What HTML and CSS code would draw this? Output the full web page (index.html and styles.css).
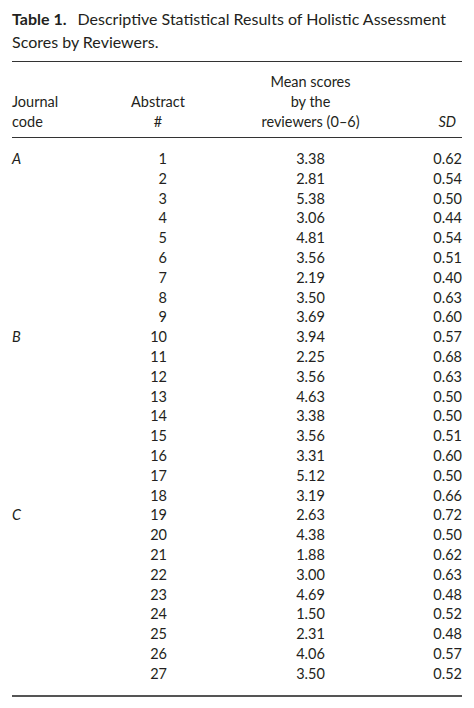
FILE: index.html
```html
<!DOCTYPE html>
<html>
<head>
<meta charset="utf-8">
<link rel="stylesheet" href="styles.css">
</head>
<body>
<div class="page">
  <div class="caption"><span class="label">Table 1.</span><span class="ctext">Descriptive Statistical Results of Holistic Assessment<br>Scores by Reviewers.</span></div>
  <div class="table">
    <div class="head">
      <div class="h h1">Journal<br>code</div>
      <div class="h h2">Abstract<br>#</div>
      <div class="h h3">Mean scores<br>by the<br>reviewers (0–6)</div>
      <div class="h h4"><i>SD</i></div>
    </div>
    <div class="body" id="body">
      <div class="c c1">A</div><div class="c c2">1</div><div class="c c3">3.38</div><div class="c c4">0.62</div>
      <div class="c c1"></div><div class="c c2">2</div><div class="c c3">2.81</div><div class="c c4">0.54</div>
      <div class="c c1"></div><div class="c c2">3</div><div class="c c3">5.38</div><div class="c c4">0.50</div>
      <div class="c c1"></div><div class="c c2">4</div><div class="c c3">3.06</div><div class="c c4">0.44</div>
      <div class="c c1"></div><div class="c c2">5</div><div class="c c3">4.81</div><div class="c c4">0.54</div>
      <div class="c c1"></div><div class="c c2">6</div><div class="c c3">3.56</div><div class="c c4">0.51</div>
      <div class="c c1"></div><div class="c c2">7</div><div class="c c3">2.19</div><div class="c c4">0.40</div>
      <div class="c c1"></div><div class="c c2">8</div><div class="c c3">3.50</div><div class="c c4">0.63</div>
      <div class="c c1"></div><div class="c c2">9</div><div class="c c3">3.69</div><div class="c c4">0.60</div>
      <div class="c c1">B</div><div class="c c2">10</div><div class="c c3">3.94</div><div class="c c4">0.57</div>
      <div class="c c1"></div><div class="c c2">11</div><div class="c c3">2.25</div><div class="c c4">0.68</div>
      <div class="c c1"></div><div class="c c2">12</div><div class="c c3">3.56</div><div class="c c4">0.63</div>
      <div class="c c1"></div><div class="c c2">13</div><div class="c c3">4.63</div><div class="c c4">0.50</div>
      <div class="c c1"></div><div class="c c2">14</div><div class="c c3">3.38</div><div class="c c4">0.50</div>
      <div class="c c1"></div><div class="c c2">15</div><div class="c c3">3.56</div><div class="c c4">0.51</div>
      <div class="c c1"></div><div class="c c2">16</div><div class="c c3">3.31</div><div class="c c4">0.60</div>
      <div class="c c1"></div><div class="c c2">17</div><div class="c c3">5.12</div><div class="c c4">0.50</div>
      <div class="c c1"></div><div class="c c2">18</div><div class="c c3">3.19</div><div class="c c4">0.66</div>
      <div class="c c1">C</div><div class="c c2">19</div><div class="c c3">2.63</div><div class="c c4">0.72</div>
      <div class="c c1"></div><div class="c c2">20</div><div class="c c3">4.38</div><div class="c c4">0.50</div>
      <div class="c c1"></div><div class="c c2">21</div><div class="c c3">1.88</div><div class="c c4">0.62</div>
      <div class="c c1"></div><div class="c c2">22</div><div class="c c3">3.00</div><div class="c c4">0.63</div>
      <div class="c c1"></div><div class="c c2">23</div><div class="c c3">4.69</div><div class="c c4">0.48</div>
      <div class="c c1"></div><div class="c c2">24</div><div class="c c3">1.50</div><div class="c c4">0.52</div>
      <div class="c c1"></div><div class="c c2">25</div><div class="c c3">2.31</div><div class="c c4">0.48</div>
      <div class="c c1"></div><div class="c c2">26</div><div class="c c3">4.06</div><div class="c c4">0.57</div>
      <div class="c c1"></div><div class="c c2">27</div><div class="c c3">3.50</div><div class="c c4">0.52</div>
    </div>
  </div>
</div>
</body>
</html>
```
FILE: styles.css
```css
html, body {
  margin: 0;
  padding: 0;
  background: #ffffff;
}
body {
  font-family: "Lato", "Liberation Sans", sans-serif;
  color: #231f20;
}
.page {
  width: 450px;
  padding: 7px 0 0 12px;
}
.caption {
  font-size: 16px;
  line-height: 23px;
  padding-bottom: 8px;
  border-bottom: 1px solid #333333;
  white-space: nowrap;
}
.label {
  font-weight: bold;
  margin-right: 11px;
}
.table {
  font-size: 14.5px;
  font-variant-numeric: tabular-nums;
}
.head, .body {
  display: grid;
  grid-template-columns: 108px 76px 229px 37px;
}
.head {
  line-height: 20px;
  padding: 10px 0 5px 0;
  border-bottom: 1px solid #333333;
  align-items: end;
}
.h1 { text-align: left; }
.h2 { text-align: center; }
.h3 { text-align: center; }
.h4 { text-align: right; padding-right: 6px; }
.body {
  line-height: 19.8px;
  padding: 11px 0 11px 0;
  border-bottom: 2px solid #555555;
}
.c1 { font-style: italic; }
.c2 { text-align: right; padding-right: 29px; }
.c3 { text-align: center; }
.c4 { text-align: right; }
```
